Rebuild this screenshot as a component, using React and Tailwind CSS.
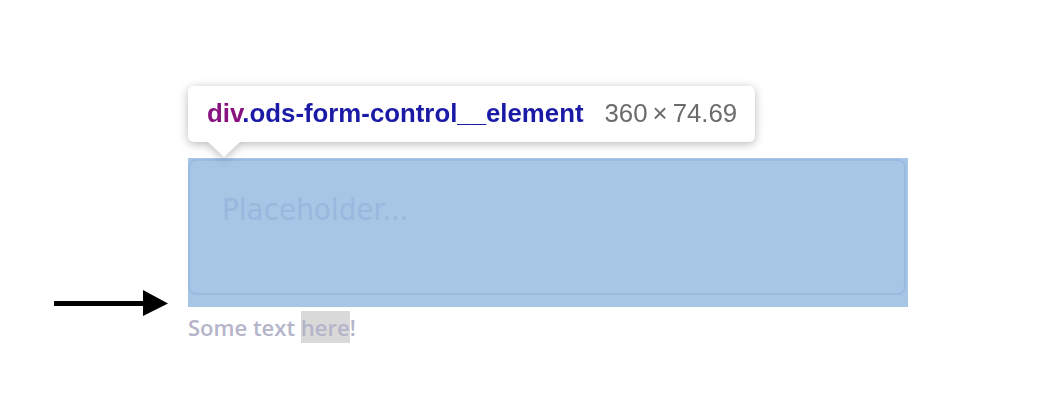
export default function App() {
  return (
    <div className="relative h-[416px] w-[1058px] overflow-hidden bg-white">
      <div className="pl-[188px] pt-[158px]">
        <FormControl />
        <p className="mt-[4px] font-['Open_Sans',sans-serif] text-[22px] font-semibold leading-[32px] text-[#b4b4ca]">
          Some text <span className="inline-block bg-[#d9d9d9]">here</span>!
        </p>
      </div>

      <Tooltip />
      <Arrow />
    </div>
  );
}

function FormControl() {
  return (
    <div className="h-[149px] w-[720px] bg-[#a7c5e5] pr-[2px] pt-[1px]">
      <div className="h-[136px] rounded-[8px] border-2 border-[#9bbae0] pl-[32px] pt-[28px]">
        <span className="font-['DejaVu_Sans_Condensed','DejaVu_Sans',sans-serif] text-[31px] leading-[40px] text-[#9ab7de]">
          Placeholder...
        </span>
      </div>
    </div>
  );
}

function Tooltip() {
  return (
    <div className="absolute left-[188px] top-[86px] drop-shadow-[0_2px_5px_rgba(0,0,0,0.28)]">
      <div className="flex h-[56px] w-[567px] items-center rounded-[6px] bg-white pl-[19px] font-['Liberation_Sans',Arial,sans-serif] text-[25.8px] leading-none">
        <span className="font-bold">
          <span className="text-[#881280]">div</span>
          <span className="text-[#1a1aa6]">.ods-form-control__element</span>
        </span>
        <span className="ml-[21px] text-[#6b6b6b]">
          360<span className="mx-[5px]">×</span>74.69
        </span>
      </div>
      <div className="ml-[20px] h-0 w-0 border-x-[16px] border-t-[15px] border-x-transparent border-t-white" />
    </div>
  );
}

function Arrow() {
  return (
    <svg
      className="absolute left-[54px] top-[290px]"
      width="115"
      height="27"
      viewBox="0 0 115 27"
    >
      <rect x="0" y="11" width="92" height="5" fill="#000" />
      <polygon points="89,0 114,13.5 89,26" fill="#000" />
    </svg>
  );
}
